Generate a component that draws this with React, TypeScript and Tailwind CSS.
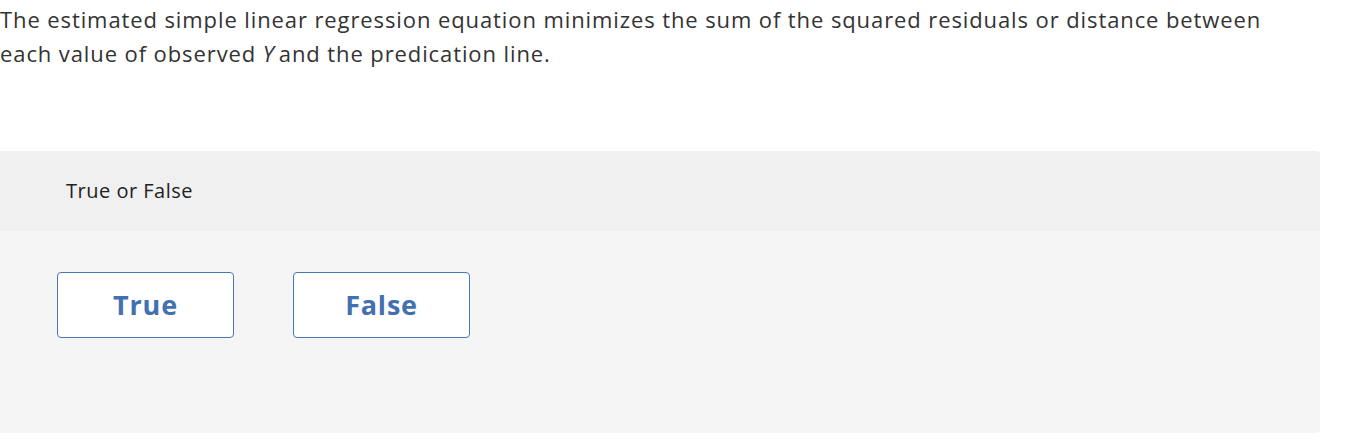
export default function App() {
  return (
    <div
      className="w-[1356px] h-[446px] bg-white text-[#333] overflow-hidden"
      style={{ fontFamily: '"Open Sans", Arial, sans-serif' }}
    >
      <p className="text-[22px] leading-[34px] pt-[2px] tracking-[0.9px] whitespace-nowrap">
        The estimated simple linear regression equation minimizes the sum of the squared residuals or distance between
        <br />
        each value of observed <i className="pr-[4px]">Y</i>and the predication line.
      </p>

      <div className="mt-[81px] w-[1320px] h-[282px] rounded-r-[4px] bg-[#f5f5f5] overflow-hidden">
        <div className="h-[80px] bg-[#f0f0f0] pl-[66px] flex items-center text-[20px] tracking-[0.5px] text-[#222]">
          True or False
        </div>
        <div className="flex gap-[59px] pl-[57px] pt-[41px]">
          {["True", "False"].map((t) => (
            <button
              key={t}
              className="w-[177px] h-[66px] bg-white border border-[#4a76b4] rounded-[4px] text-[27px] tracking-[0.8px] font-bold text-[#4370b0]"
            >
              {t}
            </button>
          ))}
        </div>
      </div>
    </div>
  );
}
